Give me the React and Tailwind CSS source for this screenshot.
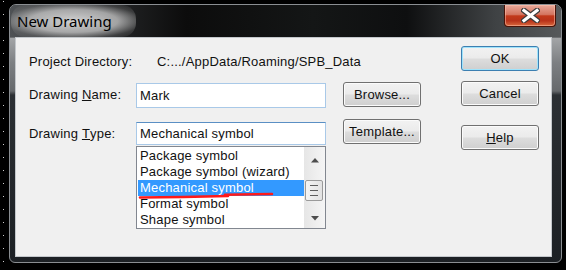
import React from "react";

const items = [
  "Package symbol",
  "Package symbol (wizard)",
  "Mechanical symbol",
  "Format symbol",
  "Shape symbol",
];

function Btn({ children, def = false, className = "" }) {
  const edge = def
    ? "border-[#3c7fb1] shadow-[inset_0_0_0_1px_#9fe3fb]"
    : "border-[#707070] shadow-[inset_0_0_0_1px_#fbfbfb]";
  return (
    <div
      className={`flex h-[25px] w-[78px] items-center justify-center rounded-[3px] border ${edge} bg-[linear-gradient(to_bottom,#f2f2f2_0%,#ebebeb_48%,#dddddd_52%,#cfcfcf_100%)] text-[13px] text-[#111] ${className}`}
    >
      {children}
    </div>
  );
}

function Arrow({ down = false }) {
  return (
    <svg width="8" height="5" viewBox="0 0 8 5">
      <path d={down ? "M0 0H8L4 4.5Z" : "M0 4.5H8L4 0Z"} fill="#4d4d4d" />
    </svg>
  );
}

export default function App() {
  return (
    <div className="flex h-[270px] w-[566px] overflow-hidden bg-black font-['Liberation_Sans',Arial,sans-serif]">
      {/* dotted guide on the left edge */}
      <div className="flex w-[9px] flex-col gap-[12px] pl-[3px] pt-[1px]">
        {Array.from({ length: 21 }).map((_, i) => (
          <div key={i} className="h-[1px] w-[1px] bg-[#d0d0d0]" />
        ))}
      </div>

      <div className="mt-[4px] flex h-[259px] w-[553px] flex-col rounded-t-[7px] rounded-b-[6px] border border-[#8a8e92] bg-[linear-gradient(to_bottom,#3a3d40_0px,#3a3d40_32px,#a3a5a7_33px,#7c7f82_58px,#66696c_86px,#2c3034_90px,#1c2024_100%)]">
        {/* title bar */}
        <div className="flex h-[32px] items-start rounded-t-[6px] bg-[linear-gradient(to_right,#4f5255_0%,#2b2d2f_14%,#0c0c0c_32%,#141616_55%,#0e0f10_72%,#3f4244_88%,#56595b_100%)]">
          <div className="ml-[1px] flex h-[32px] items-center rounded-[14px] bg-[radial-gradient(ellipse_at_center,rgba(225,225,225,0.9)_0%,rgba(205,205,205,0.75)_50%,rgba(130,130,130,0.3)_78%,transparent_100%)] pl-[6px] pr-[24px]">
            <span className="font-['Noto_Sans',sans-serif] text-[15px] leading-none text-black">
              New Drawing
            </span>
          </div>
          <div className="flex-1" />
          <div className="mr-[5px] flex h-[22px] w-[52px] items-center justify-center rounded-b-[4px] border border-t-0 border-[#4a1308] bg-[linear-gradient(to_bottom,#e9a99a_0%,#d47560_45%,#c2391b_52%,#b8321a_75%,#d9693e_100%)] shadow-[inset_0_0_0_1px_rgba(255,200,180,0.5)]">
            <svg width="19" height="15" viewBox="0 0 19 15">
              <path d="M3 2.5L16 12.5M16 2.5L3 12.5" stroke="#3b3b3b" strokeWidth="5.6" strokeLinecap="square" />
              <path d="M3 2.5L16 12.5M16 2.5L3 12.5" stroke="#ffffff" strokeWidth="3.2" strokeLinecap="square" />
            </svg>
          </div>
        </div>

        {/* client area */}
        <div className="ml-[5px] flex h-[220px] w-[537px] border border-[#c3c7cb] bg-[#f0f0f0] text-[13px] tracking-[0.2px] text-[#111]">
          <div className="flex flex-1 flex-col pl-[13px] pt-[14px]">
            <div className="flex h-[20px] items-center">
              <span className="w-[128px]">Project Directory:</span>
              <span>C:.../AppData/Roaming/SPB_Data</span>
            </div>

            <div className="mt-[10px] flex items-start">
              <div className="flex h-[25px] w-[107px] items-center pt-[1px]">
                Drawing&nbsp;<u>N</u>ame:
              </div>
              <div className="mt-[1px] flex h-[25px] w-[190px] items-center border border-[#a9c9e8] bg-white pl-[3px]">
                Mark
              </div>
              <Btn className="ml-[17px]">Browse...</Btn>
            </div>

            <div className="mt-[11px] flex items-start">
              <div className="mt-[3px] flex h-[23px] w-[107px] items-center">
                Drawing&nbsp;<u>T</u>ype:
              </div>
              <div className="mt-[3px] flex w-[190px] flex-col">
                <div className="flex h-[23px] items-center border border-[#a9c9e8] border-t-[#5a8fc4] bg-white pl-[3px]">
                  Mechanical symbol
                </div>
                <div className="relative mt-[1px] flex h-[83px] border border-[#828790] bg-white">
                  <div className="flex flex-1 flex-col pl-[1px] pt-[1px]">
                    {items.map((t, i) => (
                      <div
                        key={t}
                        className={`h-[16px] whitespace-nowrap pl-[2px] leading-[16px] ${i === 2 ? "bg-[#3399ff] text-white" : ""}`}
                      >
                        {t}
                      </div>
                    ))}
                  </div>
                  <div className="flex w-[21px] flex-col bg-[linear-gradient(to_right,#e6e6e6,#f5f5f5)]">
                    <div className="flex h-[26px] items-center justify-center pt-[1px]">
                      <Arrow />
                    </div>
                    <div className="ml-[1px] mt-[7px] flex h-[21px] w-[18px] flex-col items-center justify-center gap-[4px] rounded-[2px] border border-[#9a9a9a] bg-[linear-gradient(to_right,#f4f4f4,#e2e2e2)]">
                      <div className="h-[1px] w-[8px] bg-[#5e5e5e]" />
                      <div className="h-[1px] w-[8px] bg-[#5e5e5e]" />
                      <div className="h-[1px] w-[8px] bg-[#5e5e5e]" />
                    </div>
                    <div className="flex-1" />
                    <div className="flex h-[20px] items-center justify-center">
                      <Arrow down />
                    </div>
                  </div>
                  <svg
                    className="pointer-events-none absolute left-0 top-0"
                    width="190"
                    height="83"
                    viewBox="0 0 190 83"
                  >
                    <path d="M3 50.5Q45 50 91 49" stroke="#ff1a1a" strokeWidth="2.6" fill="none" strokeLinecap="round" />
                    <path d="M88 47.8Q112 47.4 135 47" stroke="#ff1a1a" strokeWidth="2.6" fill="none" strokeLinecap="round" />
                  </svg>
                </div>
              </div>
              <Btn className="ml-[17px]">Template...</Btn>
            </div>
          </div>

          <div className="mr-[12px] flex w-[78px] flex-col pt-[8px]">
            <Btn def>OK</Btn>
            <Btn className="mt-[10px]">Cancel</Btn>
            <Btn className="mt-[19px]">
              <span>
                <u>H</u>elp
              </span>
            </Btn>
          </div>
        </div>
      </div>
    </div>
  );
}
